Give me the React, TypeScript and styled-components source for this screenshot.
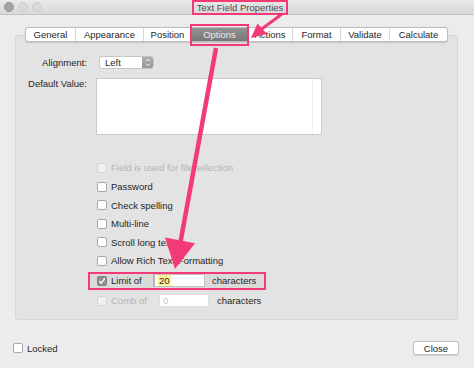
import React from 'react';
import styled, { createGlobalStyle } from 'styled-components';

const GlobalStyle = createGlobalStyle`
  html, body {
    margin: 0;
    padding: 0;
    background: #ececec;
  }
  * {
    box-sizing: border-box;
  }
`;

const PINK = '#f23a77';

const tabs = [
  { name: 'General', width: 50 },
  { name: 'Appearance', width: 68 },
  { name: 'Position', width: 48 },
  { name: 'Options', width: 56 },
  { name: 'Actions', width: 45 },
  { name: 'Format', width: 48 },
  { name: 'Validate', width: 49 },
  { name: 'Calculate', width: 57 },
];

const options = [
  { name: 'Field is used for file selection', disabled: true },
  { name: 'Password' },
  { name: 'Check spelling' },
  { name: 'Multi-line' },
  { name: 'Scroll long text' },
  { name: 'Allow Rich Text Formatting' },
];

const App = () => {
  return (
    <>
      <GlobalStyle />
      <Window>
        <TitleBar>
          <Lights>
            <Light $dark />
            <Light />
            <Light />
          </Lights>
          <TitleBox>Text Field Properties</TitleBox>
        </TitleBar>

        <Content>
          <TabBar>
            {tabs.map((t, i) => (
              <Tab
                key={`tab-${i + 1}`}
                $width={t.width}
                $selected={t.name === 'Options'}
                $last={i === tabs.length - 1}
              >
                {t.name}
              </Tab>
            ))}
          </TabBar>

          <Panel>
            <Form>
              <Label>Alignment:</Label>
              <Select>
                <span>Left</span>
                <Stepper>
                  <svg width="6" height="9" viewBox="0 0 6 9">
                    <path d="M1 3.2 L3 1.2 L5 3.2" fill="none" stroke="#fff" strokeWidth="1" />
                    <path d="M1 5.8 L3 7.8 L5 5.8" fill="none" stroke="#fff" strokeWidth="1" />
                  </svg>
                </Stepper>
              </Select>
              <Label $top>Default Value:</Label>
              <TextArea>
                <ScrollStrip />
              </TextArea>
            </Form>

            <CheckList>
              {options.map((o, i) => (
                <CheckRow key={`opt-${i + 1}`}>
                  <Box $disabled={o.disabled} />
                  <Text $disabled={o.disabled}>{o.name}</Text>
                </CheckRow>
              ))}
              <LimitRow>
                <Box $checked>
                  <svg width="8" height="8" viewBox="0 0 8 8">
                    <path d="M1.3 4.2 L3.2 6.1 L6.8 1.4" fill="none" stroke="#fff" strokeWidth="1.4" />
                  </svg>
                </Box>
                <Text $width={42}>Limit of</Text>
                <SmallInput $width={52}>
                  <Highlight>20</Highlight>
                </SmallInput>
                <Suffix>characters</Suffix>
              </LimitRow>
              <CheckRow $comb>
                <Box $disabled />
                <Text $disabled $width={48}>Comb of</Text>
                <SmallInput $width={50} $plain>
                  <Placeholder>0</Placeholder>
                </SmallInput>
                <Suffix $gap={8}>characters</Suffix>
              </CheckRow>
            </CheckList>
          </Panel>
        </Content>

        <Footer>
          <CheckRow>
            <Box />
            <Text>Locked</Text>
          </CheckRow>
          <Button>Close</Button>
        </Footer>

        {/* annotation arrows drawn over the dialog */}
        <Arrows width="474" height="368" viewBox="0 0 474 368">
          <line x1="282" y1="14" x2="261" y2="29.5" stroke={PINK} strokeWidth="3" />
          <polygon points="251,38 257.5,23.5 267,34" fill={PINK} />
          <line x1="216" y1="48" x2="180.5" y2="242" stroke={PINK} strokeWidth="4.5" />
          <polygon points="175,269 165,237.5 195,243.2" fill={PINK} />
        </Arrows>
      </Window>
    </>
  );
};

const Window = styled.div`
  position: relative;
  width: 474px;
  height: 368px;
  overflow: hidden;
  background: #ececec;
  display: flex;
  flex-direction: column;
  font-family: 'Liberation Sans', Arial, sans-serif;
  font-size: 9.5px;
  color: #262626;
`;

const TitleBar = styled.div`
  position: relative;
  height: 15px;
  flex-shrink: 0;
  display: flex;
  justify-content: center;
  align-items: flex-start;
  background: linear-gradient(#e9e9e9, #d8d8d8);
  border-bottom: 1px solid #c4c4c4;
`;

const Lights = styled.div`
  position: absolute;
  left: 4px;
  top: 2px;
  display: flex;
  gap: 4px;
`;

const Light = styled.span<{ $dark?: boolean }>`
  width: 10px;
  height: 10px;
  border-radius: 50%;
  background: ${({ $dark }) => ($dark ? '#a3a3a3' : '#d9d9d9')};
  border: 1px solid ${({ $dark }) => ($dark ? '#979797' : '#cdcdcd')};
`;

const TitleBox = styled.div`
  margin-left: 6px;
  width: 96px;
  height: 15px;
  border: 2px solid ${PINK};
  display: flex;
  align-items: center;
  justify-content: center;
  color: #4a4a4a;
  font-size: 9.5px;
  white-space: nowrap;
`;

const Content = styled.div`
  display: flex;
  flex-direction: column;
  padding: 12px 16px 0 15px;
`;

const TabBar = styled.div`
  position: relative;
  z-index: 1;
  align-self: center;
  display: flex;
  height: 15px;
  background: #fff;
  border: 1px solid #bcbcbc;
  border-radius: 3px;
  box-shadow: 0 0.5px 1px rgba(0, 0, 0, 0.12);
`;

const Tab = styled.div<{ $width: number; $selected?: boolean; $last?: boolean }>`
  position: relative;
  width: ${({ $width }) => $width}px;
  display: flex;
  align-items: center;
  justify-content: center;
  border-right: ${({ $last }) => ($last ? 'none' : '1px solid #d6d6d6')};
  background: ${({ $selected }) =>
    $selected ? 'linear-gradient(#929292, #777777)' : 'transparent'};
  color: ${({ $selected }) => ($selected ? '#ececec' : '#262626')};
  white-space: nowrap;
  ${({ $selected }) =>
    $selected &&
    `
    &::after {
      content: '';
      position: absolute;
      inset: -4px -2px -5px -2px;
      border: 2px solid ${PINK};
    }
  `}
`;

const Panel = styled.div`
  margin-top: -7px;
  height: 285px;
  background: #e3e3e3;
  border: 1px solid #d6d6d6;
  border-radius: 3px;
  padding-top: 20px;
`;

const Form = styled.div`
  display: grid;
  grid-template-columns: 71px 1fr;
  column-gap: 9px;
  row-gap: 9px;
  align-items: center;
`;

const Label = styled.div<{ $top?: boolean }>`
  text-align: right;
  align-self: ${({ $top }) => ($top ? 'start' : 'center')};
  line-height: 11px;
`;

const Select = styled.div`
  margin-left: 3px;
  width: 55px;
  height: 13px;
  display: flex;
  align-items: center;
  justify-content: space-between;
  background: #fff;
  border: 1px solid #c6c6c6;
  border-radius: 3px;
  padding-left: 5px;
  overflow: hidden;
`;

const Stepper = styled.div`
  width: 11px;
  height: 100%;
  display: flex;
  align-items: center;
  justify-content: center;
  background: linear-gradient(#acacac, #979797);
`;

const TextArea = styled.div`
  position: relative;
  width: 226px;
  height: 57px;
  background: #fff;
  border: 1px solid #c9c9c9;
`;

const ScrollStrip = styled.div`
  position: absolute;
  right: 0;
  top: 0;
  bottom: 0;
  width: 9px;
  border-left: 1px solid #f0f0f0;
`;

const CheckList = styled.div`
  display: flex;
  flex-direction: column;
  margin-top: 23.7px;
  padding-left: 81px;
`;

const CheckRow = styled.div<{ $comb?: boolean }>`
  display: flex;
  align-items: center;
  height: ${({ $comb }) => ($comb ? '18px' : '18.6px')};
  margin-top: ${({ $comb }) => ($comb ? '2px' : '0')};
`;

const LimitRow = styled.div`
  display: flex;
  align-items: center;
  width: 178px;
  height: 18px;
  margin: 1.7px 0 0 -9px;
  padding-left: 7px;
  border: 2px solid ${PINK};
  background: #dadada;
`;

const Box = styled.span<{ $checked?: boolean; $disabled?: boolean }>`
  width: 10px;
  height: 10px;
  flex-shrink: 0;
  display: flex;
  align-items: center;
  justify-content: center;
  border-radius: 2px;
  margin-right: 4px;
  background: ${({ $checked, $disabled }) =>
    $checked ? '#8f8f8f' : $disabled ? '#efefef' : '#fff'};
  border: 1px solid
    ${({ $checked, $disabled }) =>
      $checked ? '#808080' : $disabled ? '#d4d4d4' : '#a8a8a8'};
`;

const Text = styled.span<{ $disabled?: boolean; $width?: number }>`
  color: ${({ $disabled }) => ($disabled ? '#b4b4b4' : '#262626')};
  white-space: nowrap;
  ${({ $width }) => ($width ? `width: ${$width}px;` : '')}
`;

const SmallInput = styled.div<{ $width: number; $plain?: boolean }>`
  width: ${({ $width }) => $width}px;
  height: 13px;
  display: flex;
  align-items: center;
  padding-left: 3px;
  background: #fff;
  border: 1px solid ${({ $plain }) => ($plain ? '#dedede' : '#c2c2c2')};
  border-left: ${({ $plain }) => ($plain ? '1px solid #dedede' : '2px solid #b5b5b5')};
`;

const Highlight = styled.span`
  background: #fbf29a;
  padding: 0 1px;
  color: #262626;
`;

const Placeholder = styled.span`
  color: #c6c6c6;
`;

const Suffix = styled.span<{ $gap?: number }>`
  margin-left: ${({ $gap }) => $gap ?? 7}px;
  white-space: nowrap;
`;

const Footer = styled.div`
  display: flex;
  align-items: center;
  justify-content: space-between;
  margin-top: 21px;
  padding: 0 15px 0 13px;
  height: 14px;
`;

const Button = styled.div`
  width: 46px;
  height: 14px;
  display: flex;
  align-items: center;
  justify-content: center;
  background: #fff;
  border: 1px solid #c3c3c3;
  border-radius: 3px;
  box-shadow: 0 0.5px 1px rgba(0, 0, 0, 0.12);
`;

const Arrows = styled.svg`
  position: absolute;
  z-index: 2;
  left: 0;
  top: 0;
  pointer-events: none;
`;

export default App;
